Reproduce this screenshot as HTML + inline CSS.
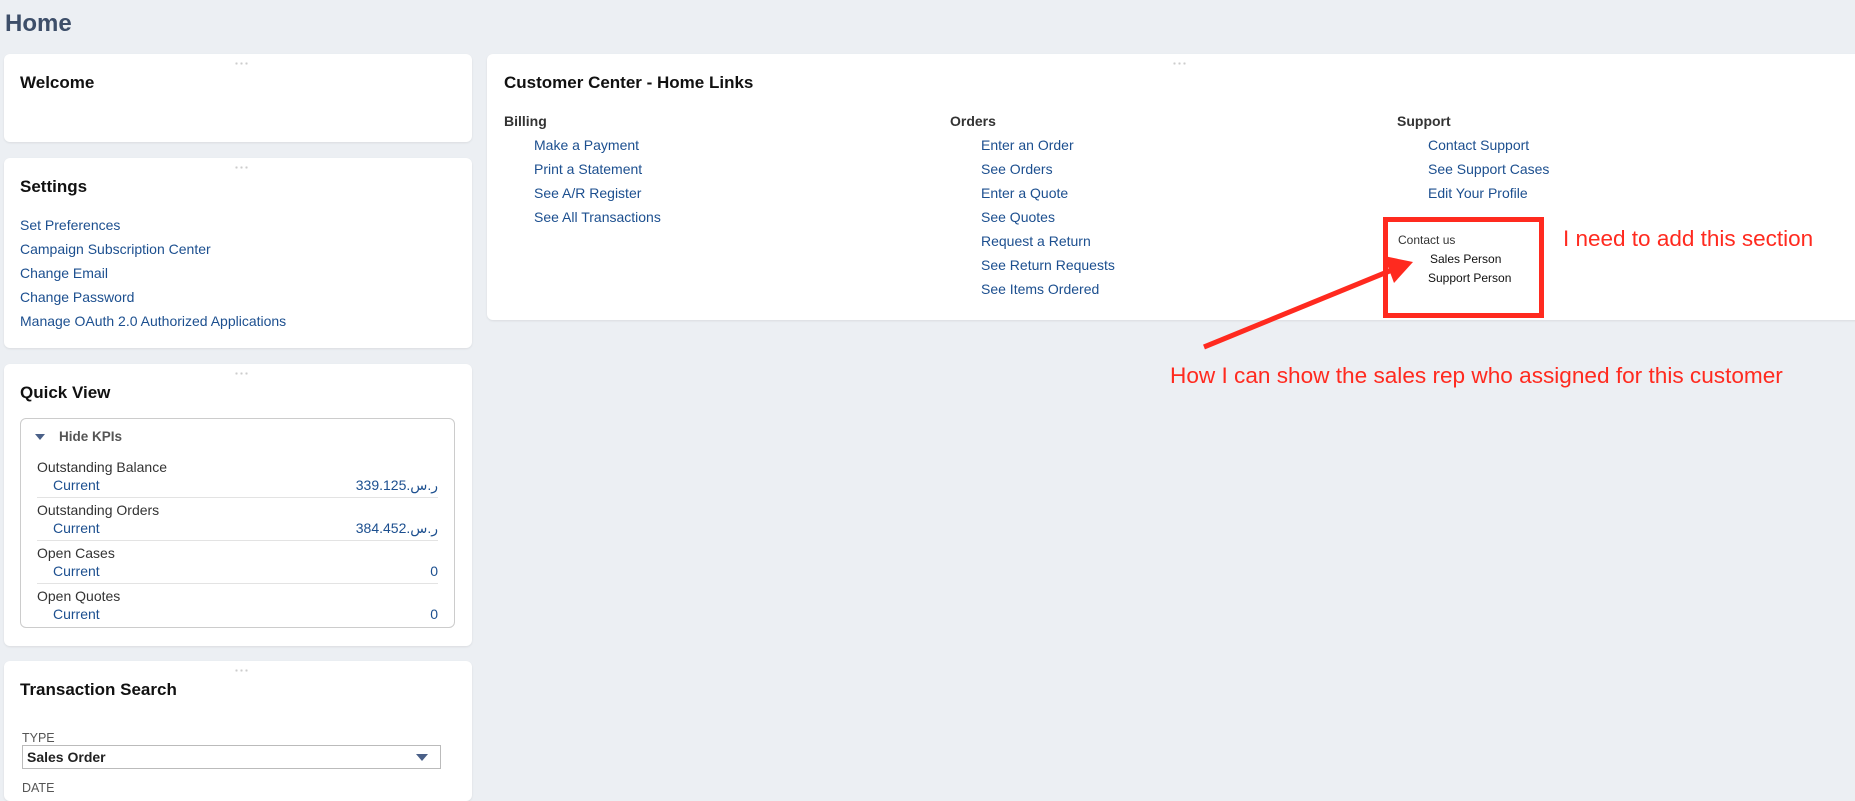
<!DOCTYPE html>
<html><head><meta charset="utf-8"><style>
*{margin:0;padding:0;box-sizing:border-box}
body{width:1855px;height:790px;background:#eceff3;font-family:"Liberation Sans","DejaVu Sans",sans-serif;position:relative;overflow:hidden}
.a{position:absolute;white-space:nowrap}
.card{position:absolute;background:#fff;border-radius:6px;box-shadow:0 1px 2px rgba(0,0,0,.08)}
.h{font-size:17px;color:#111;font-weight:600}
.l{font-size:14px;color:#1c4f8f}
.t{font-size:14px;color:#333}
.dots{position:absolute;top:7px;width:16px;height:6px;background-image:radial-gradient(circle,#ccc 1px,transparent 1.3px);background-size:5px 5px}
.sep{position:absolute;left:16px;right:16px;height:1px;background:#e3e3e3}
.red{color:#ff2a1f;font-family:"Liberation Sans",Arial,sans-serif}
</style></head><body>
<div class="a" style="left:5px;top:10px;font-size:24px;font-weight:bold;color:#3d4e69">Home</div>

<div class="card" style="left:4px;top:54px;width:468px;height:88px"><div class="dots" style="left:230px"></div>
<div class="a h" style="left:16px;top:19px">Welcome</div></div>

<div class="card" style="left:4px;top:158px;width:468px;height:190px"><div class="dots" style="left:230px"></div>
<div class="a h" style="left:16px;top:19px">Settings</div>
<div class="a l" style="left:16px;top:59px">Set Preferences</div>
<div class="a l" style="left:16px;top:83px">Campaign Subscription Center</div>
<div class="a l" style="left:16px;top:107px">Change Email</div>
<div class="a l" style="left:16px;top:131px">Change Password</div>
<div class="a l" style="left:16px;top:155px">Manage OAuth 2.0 Authorized Applications</div></div>

<div class="card" style="left:4px;top:364px;width:468px;height:282px"><div class="dots" style="left:230px"></div>
<div class="a h" style="left:16px;top:19px">Quick View</div>
<div style="position:absolute;left:16px;top:54px;width:435px;height:210px;border:1px solid #ccc;border-radius:6px">
<div class="a" style="left:14px;top:15px;width:0;height:0;border-left:5px solid transparent;border-right:5px solid transparent;border-top:6px solid #4a6088"></div>
<div class="a" style="left:38px;top:10px;font-size:13.5px;font-weight:bold;color:#555">Hide KPIs</div>
<div class="a t" style="left:16px;top:40px">Outstanding Balance</div>
<div class="a l" style="left:32px;top:58px">Current</div><div class="a l" style="right:16px;top:58px">339.125.ر.س</div>
<div class="sep" style="top:78px"></div>
<div class="a t" style="left:16px;top:83px">Outstanding Orders</div>
<div class="a l" style="left:32px;top:101px">Current</div><div class="a l" style="right:16px;top:101px">384.452.ر.س</div>
<div class="sep" style="top:121px"></div>
<div class="a t" style="left:16px;top:126px">Open Cases</div>
<div class="a l" style="left:32px;top:144px">Current</div><div class="a l" style="right:16px;top:144px">0</div>
<div class="sep" style="top:164px"></div>
<div class="a t" style="left:16px;top:169px">Open Quotes</div>
<div class="a l" style="left:32px;top:187px">Current</div><div class="a l" style="right:16px;top:187px">0</div>
</div></div>

<div class="card" style="left:4px;top:661px;width:468px;height:140px"><div class="dots" style="left:230px"></div>
<div class="a h" style="left:16px;top:19px">Transaction Search</div>
<div class="a" style="left:18px;top:70px;font-size:12.5px;color:#555">TYPE</div>
<div style="position:absolute;left:18px;top:84px;width:419px;height:24px;border:1px solid #bbb"><div class="a" style="left:4px;top:3px;font-size:14px;font-weight:600;color:#222">Sales Order</div>
<div class="a" style="right:12px;top:8px;width:0;height:0;border-left:6px solid transparent;border-right:6px solid transparent;border-top:7px solid #4a6088"></div></div>
<div class="a" style="left:18px;top:120px;font-size:12.5px;color:#555">DATE</div></div>

<div class="card" style="left:487px;top:54px;width:1380px;height:266px;border-radius:6px 0 0 6px"><div class="dots" style="left:685px"></div>
<div class="a h" style="left:17px;top:19px">Customer Center - Home Links</div>
<div class="a" style="left:17px;top:59px;font-size:14px;font-weight:bold;color:#333">Billing</div>
<div class="a" style="left:463px;top:59px;font-size:14px;font-weight:bold;color:#333">Orders</div>
<div class="a" style="left:910px;top:59px;font-size:14px;font-weight:bold;color:#333">Support</div>
<div class="a l" style="left:47px;top:83px">Make a Payment</div>
<div class="a l" style="left:47px;top:107px">Print a Statement</div>
<div class="a l" style="left:47px;top:131px">See A/R Register</div>
<div class="a l" style="left:47px;top:155px">See All Transactions</div>
<div class="a l" style="left:494px;top:83px">Enter an Order</div>
<div class="a l" style="left:494px;top:107px">See Orders</div>
<div class="a l" style="left:494px;top:131px">Enter a Quote</div>
<div class="a l" style="left:494px;top:155px">See Quotes</div>
<div class="a l" style="left:494px;top:179px">Request a Return</div>
<div class="a l" style="left:494px;top:203px">See Return Requests</div>
<div class="a l" style="left:494px;top:227px">See Items Ordered</div>
<div class="a l" style="left:941px;top:83px">Contact Support</div>
<div class="a l" style="left:941px;top:107px">See Support Cases</div>
<div class="a l" style="left:941px;top:131px">Edit Your Profile</div>
</div>

<div style="position:absolute;left:1383px;top:217px;width:161px;height:101px;border:5px solid #ff2a1f"></div>
<div class="a" style="left:1398px;top:233px;font-size:12px;color:#333;font-family:Arial,'Liberation Sans',sans-serif">Contact us</div>
<div class="a" style="left:1430px;top:252px;font-size:12px;color:#111;font-family:Arial,'Liberation Sans',sans-serif">Sales Person</div>
<div class="a" style="left:1428px;top:271px;font-size:12px;color:#111;font-family:Arial,'Liberation Sans',sans-serif">Support Person</div>
<div class="a red" style="left:1563px;top:226px;font-size:22.5px">I need to add this section</div>
<div class="a red" style="left:1170px;top:363px;font-size:22.6px">How I can show the sales rep who assigned for this customer</div>
<svg style="position:absolute;left:0;top:0" width="1855" height="790"><line x1="1204" y1="347" x2="1392" y2="270" stroke="#ff2a1f" stroke-width="5"/><polygon points="1413,262 1384,256 1394,283" fill="#ff2a1f"/></svg>
</body></html>
